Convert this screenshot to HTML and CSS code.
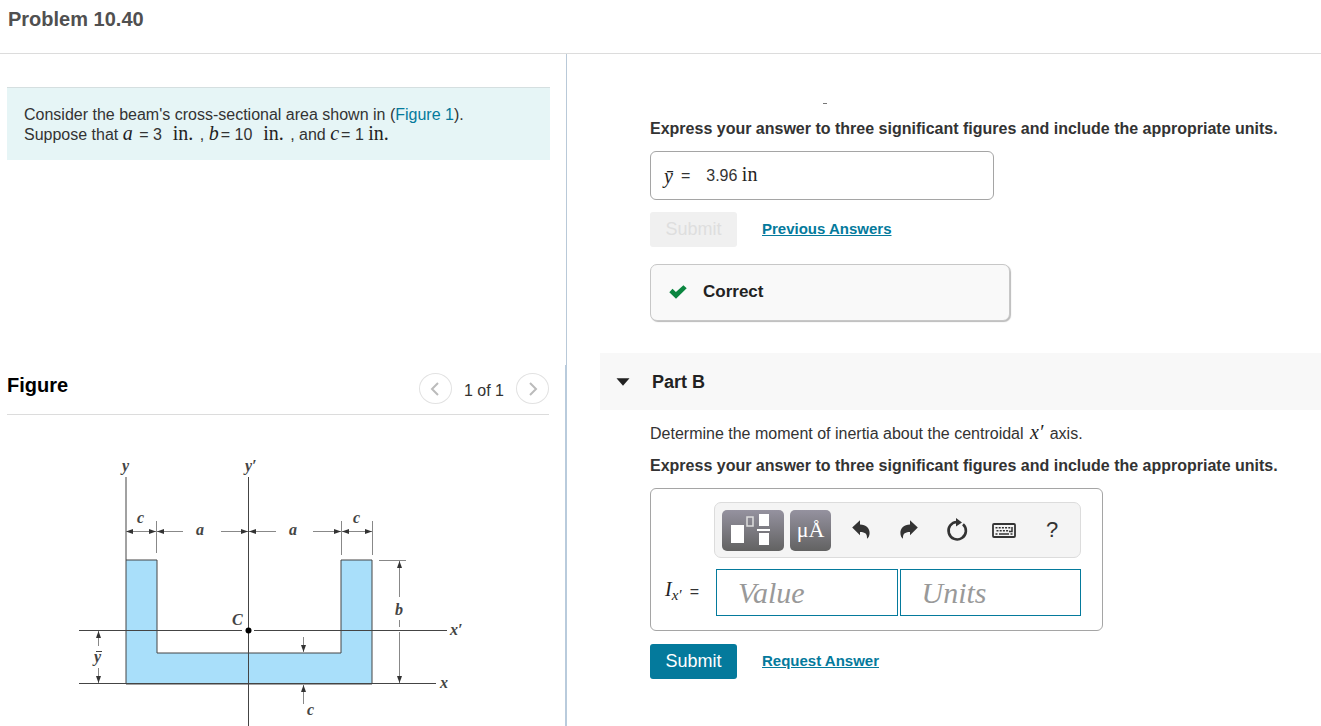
FILE: index.html
```html
<!DOCTYPE html>
<html lang="en">
<head>
<meta charset="utf-8">
<title>Problem 10.40</title>
<link rel="stylesheet" href="styles.css">
</head>
<body>
<header class="page-header"><h1>Problem 10.40</h1></header>
<main class="workspace">
  <div class="left">
    <section class="intro-pane">
      <p class="intro">Consider the beam's cross-sectional area shown in (<a href="#figure">Figure 1</a>).<br>Suppose that <i class="m">a</i> <span class="val">= 3</span> &nbsp;<span class="m unit">in.</span> , <i class="m">b</i><span class="val">= 10</span> &nbsp;<span class="m unit">in.</span> , and <i class="m">c</i><span class="val">= 1</span> <span class="m">in.</span></p>
    </section>
    <section class="figure-pane" id="figure">
      <div class="figure-head">
        <h2>Figure</h2>
        <nav class="pager" aria-label="Figures">
          <button type="button" aria-label="Previous figure"><svg width="10" height="16" viewBox="0 0 10 16"><path d="M8 2 2 8l6 6"/></svg></button>
          <span>1 of 1</span>
          <button type="button" aria-label="Next figure"><svg width="10" height="16" viewBox="0 0 10 16"><path d="m2 2 6 6-6 6"/></svg></button>
        </nav>
      </div>
      <svg class="beam" viewBox="60 440 440 286" role="img" aria-label="U-shaped beam cross section with dimensions a, b and c">
        <defs>
          <marker id="tip" viewBox="0 0 7 5" refX="7" refY="2.5" markerWidth="7" markerHeight="5" orient="auto-start-reverse" markerUnits="userSpaceOnUse"><path class="tip" d="M0 0 7 2.5 0 5z"/></marker>
        </defs>
        <path class="shape" d="M126 560h31v93h184v-93h31v124H126z"/>
        <g class="axis">
          <path d="M126 477v83M248.500 477v249M79 630.500h163M254 630.500h193M79 683.500h357"/>
        </g>
        <circle cx="248.500" cy="630.500" r="3"/>
        <g class="thin">
          <path d="M156.500 521v32M341.500 521v34M372.500 521v34M379 560.500h27"/>
          <path marker-start="url(#tip)" marker-end="url(#tip)" d="M126 531.500h30"/>
          <path marker-start="url(#tip)" d="M157 531.500h26"/>
          <path marker-end="url(#tip)" d="M221 531.500h27"/>
          <path marker-start="url(#tip)" d="M249 531.500h27"/>
          <path marker-end="url(#tip)" d="M313 531.500h28"/>
          <path marker-start="url(#tip)" marker-end="url(#tip)" d="M342 531.500h30"/>
          <path marker-start="url(#tip)" d="M399.500 561v36"/>
          <path marker-end="url(#tip)" d="M399.500 632v51"/>
          <path d="M399.500 620v7"/>
          <path marker-start="url(#tip)" d="M98.500 631v15"/>
          <path marker-end="url(#tip)" d="M98.500 668v15"/>
          <path marker-end="url(#tip)" d="M303.500 637v15"/>
          <path marker-start="url(#tip)" d="M303.500 685v19"/>
        </g>
        <g class="labels">
          <text x="122" y="471">y</text><text x="245" y="471">y′</text>
          <text x="137" y="523">c</text><text x="353" y="523">c</text>
          <text x="196" y="535">a</text><text x="289" y="535">a</text>
          <text x="232" y="625">C</text><text x="395" y="615">b</text>
          <text x="450" y="635">x′</text><text x="440" y="688">x</text>
          <text x="94" y="662">y</text><text x="307" y="715">c</text>
        </g>
        <path class="axis" d="M96 651.500h6"/>
      </svg>
    </section>
  </div>
  <div class="right">
    <section class="part">
      <div class="cut-line"><span></span></div>
      <p class="instruction">Express your answer to three significant figures and include the appropriate units.</p>
      <div class="given"><i class="m">ȳ</i><span class="eq">=</span><span>3.96 <span class="m">in</span></span></div>
      <div class="actions"><button class="submit" type="button" disabled>Submit</button><a href="#previous">Previous Answers</a></div>
      <div class="result"><svg width="18" height="14" viewBox="0 0 18 14"><path d="M.3 7.200 3.500 3.800 6.900 6.900 14.400.2l3.300 3L7 13.700z"/></svg><strong>Correct</strong></div>
    </section>
    <button class="part-head" type="button" aria-expanded="true"><svg width="14" height="8" viewBox="0 0 14 8"><path d="M.5.3h13L7 7.700z"/></svg>Part B</button>
    <section class="part part-b">
      <p class="question">Determine the moment of inertia about the centroidal <i class="m unit">x′</i> axis.</p>
      <p class="instruction">Express your answer to three significant figures and include the appropriate units.</p>
      <form class="answer">
        <div class="toolbar">
          <button class="palette wide" type="button" aria-label="Templates"><svg width="62" height="41" viewBox="0 0 62 41"><path fill="#fff" d="M9 15h13v18H9zM37 4h10v12H37zM37 23h10v12H37zM35 19h13v2H35z"/><path fill="none" stroke="#ddd" stroke-width="1.500" d="M25 7h6v9h-6z"/></svg></button>
          <button class="palette" type="button">μÅ</button>
          <button class="tool" type="button" aria-label="Undo"><svg width="18" height="20" viewBox="0 0 18 20"><path d="M.2 7.500 8 .3v4.200c6.200 0 9.600 3.800 9.600 8.500 0 2.500-1 4.700-2.600 5.700.4-4.700-1.600-6.700-7-6.700v3.200z"/></svg></button>
          <button class="tool" type="button" aria-label="Redo"><svg width="18" height="20" viewBox="0 0 18 20"><path d="M17.800 7.500 10 .3v4.200C3.800 4.500.4 8.300.4 13c0 2.500 1 4.700 2.600 5.700-.4-4.700 1.600-6.700 7-6.700v3.200z"/></svg></button>
          <button class="tool" type="button" aria-label="Reset"><svg width="22" height="24" viewBox="0 0 22 24"><path fill="none" stroke="#333" stroke-width="2.600" d="M17 6.200A8.700 8.700 0 1 1 11 4"/><path d="m10 0 6 4.500-6 4z"/></svg></button>
          <button class="tool" type="button" aria-label="Keyboard"><svg width="24" height="15" viewBox="0 0 24 15"><rect x="1" y="1" width="22" height="13" rx="1" fill="none" stroke="#333" stroke-width="1.800"/><path fill="none" stroke="#333" stroke-width="1.500" stroke-dasharray="2 1.200" d="M3.500 4.800h15M4.500 7.800h13"/><path fill="none" stroke="#333" stroke-width="1.500" d="M3.500 11h2M7 11h10M18.500 11h2M20 4v4.500h-3"/></svg></button>
          <button class="tool help" type="button" aria-label="Help">?</button>
        </div>
        <label class="quantity" for="value"><i class="m">I<sub>x′</sub></i><span>=</span></label>
        <div class="fields"><input id="value" type="text" placeholder="Value"><input type="text" placeholder="Units" aria-label="Units"></div>
      </form>
      <div class="actions"><button class="submit" type="button">Submit</button><a href="#request">Request Answer</a></div>
    </section>
  </div>
</main>
</body>
</html>
```
FILE: styles.css
```css
* { box-sizing: border-box; }
body {
  margin: 0;
  min-height: 100vh;
  display: flex;
  flex-direction: column;
  background: #fff;
  color: #333;
  font: 16px/20px "Liberation Sans", Arial, sans-serif;
}
h1, h2, p { margin: 0; }
button { font: inherit; color: inherit; border: 0; padding: 0; cursor: pointer; }
a { color: #047a9c; }
.m { font-family: "Liberation Serif", "Times New Roman", serif; font-size: 20px; line-height: 0; color: #222; }
.val { margin-left: 2px; }
.unit { margin: 0 2px; }

.page-header { padding: 7px 8px 22px; border-bottom: 1px solid #dcdcdc; }
.page-header h1 { font-size: 20px; line-height: 24px; color: #505050; }
.workspace { flex: 1; display: grid; grid-template-columns: 43% 57%; }

.left { display: flex; flex-direction: column; padding-right: 1px; }
.intro-pane { flex: 1; padding: 33px 16px 0 7px; border-right: 1px solid #b9c9d8; }
.intro { padding: 17px 17px 15px; background: #e6f5f6; border-top: 1px solid #d5dfe0; }
.intro a { text-decoration: none; }
.figure-pane { padding: 8px 16px 0 7px; border-right: 2px solid #b9cbdc; }
.figure-head { display: flex; justify-content: space-between; padding-bottom: 10px; border-bottom: 1px solid #dcdcdc; }
.figure-head h2 { font-size: 20px; line-height: 24px; color: #000; }
.pager { display: flex; align-items: center; gap: 12px; }
.pager span { padding-top: 4px; }
.pager button {
  width: 33px; height: 31px;
  display: grid; place-items: center;
  border: 1px solid #e2e2e2; border-radius: 50%;
  background: #fff;
}
.pager path { fill: none; stroke: #bbb; stroke-width: 2; }
.beam { display: block; width: 440px; max-width: 100%; margin: 25px 0 0 53px; }
.shape { fill: #a9dffa; stroke: #444; stroke-width: 1px; }
.axis { stroke: #444; stroke-width: 1px; fill: none; }
.thin { stroke: #888; stroke-width: 1px; fill: none; }
.tip { fill: #333; stroke: none; }
.labels { font: italic bold 16px "Liberation Serif", "Times New Roman", serif; fill: #444; }

.right { padding: 49px 0 0 32px; }
.part { padding-left: 50px; }
.cut-line { height: 16px; padding-left: 173px; }
.cut-line span { display: block; width: 4px; height: 1px; background: #777; }
.instruction { font-weight: bold; }
.given {
  display: flex; align-items: center;
  max-width: 344px; height: 49px; margin-top: 12px; padding: 0 13px;
  border: 1px solid #a5a5a5; border-radius: 6px;
}
.eq { margin: 0 16px 0 8px; }
.actions { display: flex; align-items: center; gap: 25px; margin-top: 12px; }
.actions a { padding-bottom: 2px; font-size: 15px; font-weight: bold; }
.submit { width: 87px; height: 35px; padding-bottom: 2px; border-radius: 3px; background: #047a9c; color: #fff; font-size: 18px; }
.submit:disabled { background: #f0f0f0; color: #dedede; cursor: default; }
.result {
  display: flex; align-items: center; gap: 16px;
  max-width: 360px; height: 57px; margin-top: 17px; padding: 0 18px 2px;
  border: 1px solid #c7c7c7; border-radius: 7px;
  background: #f9f9f9; color: #222; font-size: 17px;
  box-shadow: 1px 1px 1px #bbb;
}
.result path { fill: #0b8640; }
.part-head {
  display: flex; align-items: center; gap: 22px;
  width: 100%; height: 57px; margin-top: 32px; padding: 0 16px;
  background: #f8f8f8; color: #222;
  font-size: 18px; font-weight: bold;
}
.part-head path { fill: #222; }
.part-b { padding-top: 14px; }
.question { margin-bottom: 12px; }
.answer {
  display: grid; grid-template-columns: 50px 1fr; gap: 11px 0;
  max-width: 453px; margin-top: 12px; padding: 13px 21px 14px 13px;
  border: 1px solid #a5a5a5; border-radius: 6px;
}
.toolbar {
  grid-column: 2;
  display: flex; align-items: center;
  height: 56px; padding: 0 4px 0 7px;
  background: #f4f4f4; border: 1px solid #dcdcdc; border-radius: 7px;
}
.palette {
  width: 41px; height: 41px; margin-right: 6px;
  display: grid; place-items: center;
  border-radius: 5px;
  background: linear-gradient(#95929f, #626262); color: #fff;
  font: 22px "Liberation Serif", "Times New Roman", serif;
}
.palette.wide { width: 62px; }
.tool { flex: 1; height: 40px; display: grid; place-items: center; background: none; }
.tool svg { fill: #333; }
.help { font-size: 22px; }
.quantity { display: flex; align-items: center; gap: 8px; padding: 0 0 2px 1px; }
.quantity sub { font-size: 15px; line-height: 0; vertical-align: -4px; }
.fields { display: grid; grid-template-columns: 1fr 1fr; gap: 2px; padding-left: 2px; }
.fields input {
  width: 100%; min-width: 0; height: 47px; padding: 0 21px;
  border: 1px solid #047a9c; border-radius: 0; background: #fff; color: #333;
  font: italic 30px "Liberation Serif", "Times New Roman", serif;
}
.fields input::placeholder { color: #999; opacity: 1; }
.part-b .actions { margin-top: 13px; }
```
